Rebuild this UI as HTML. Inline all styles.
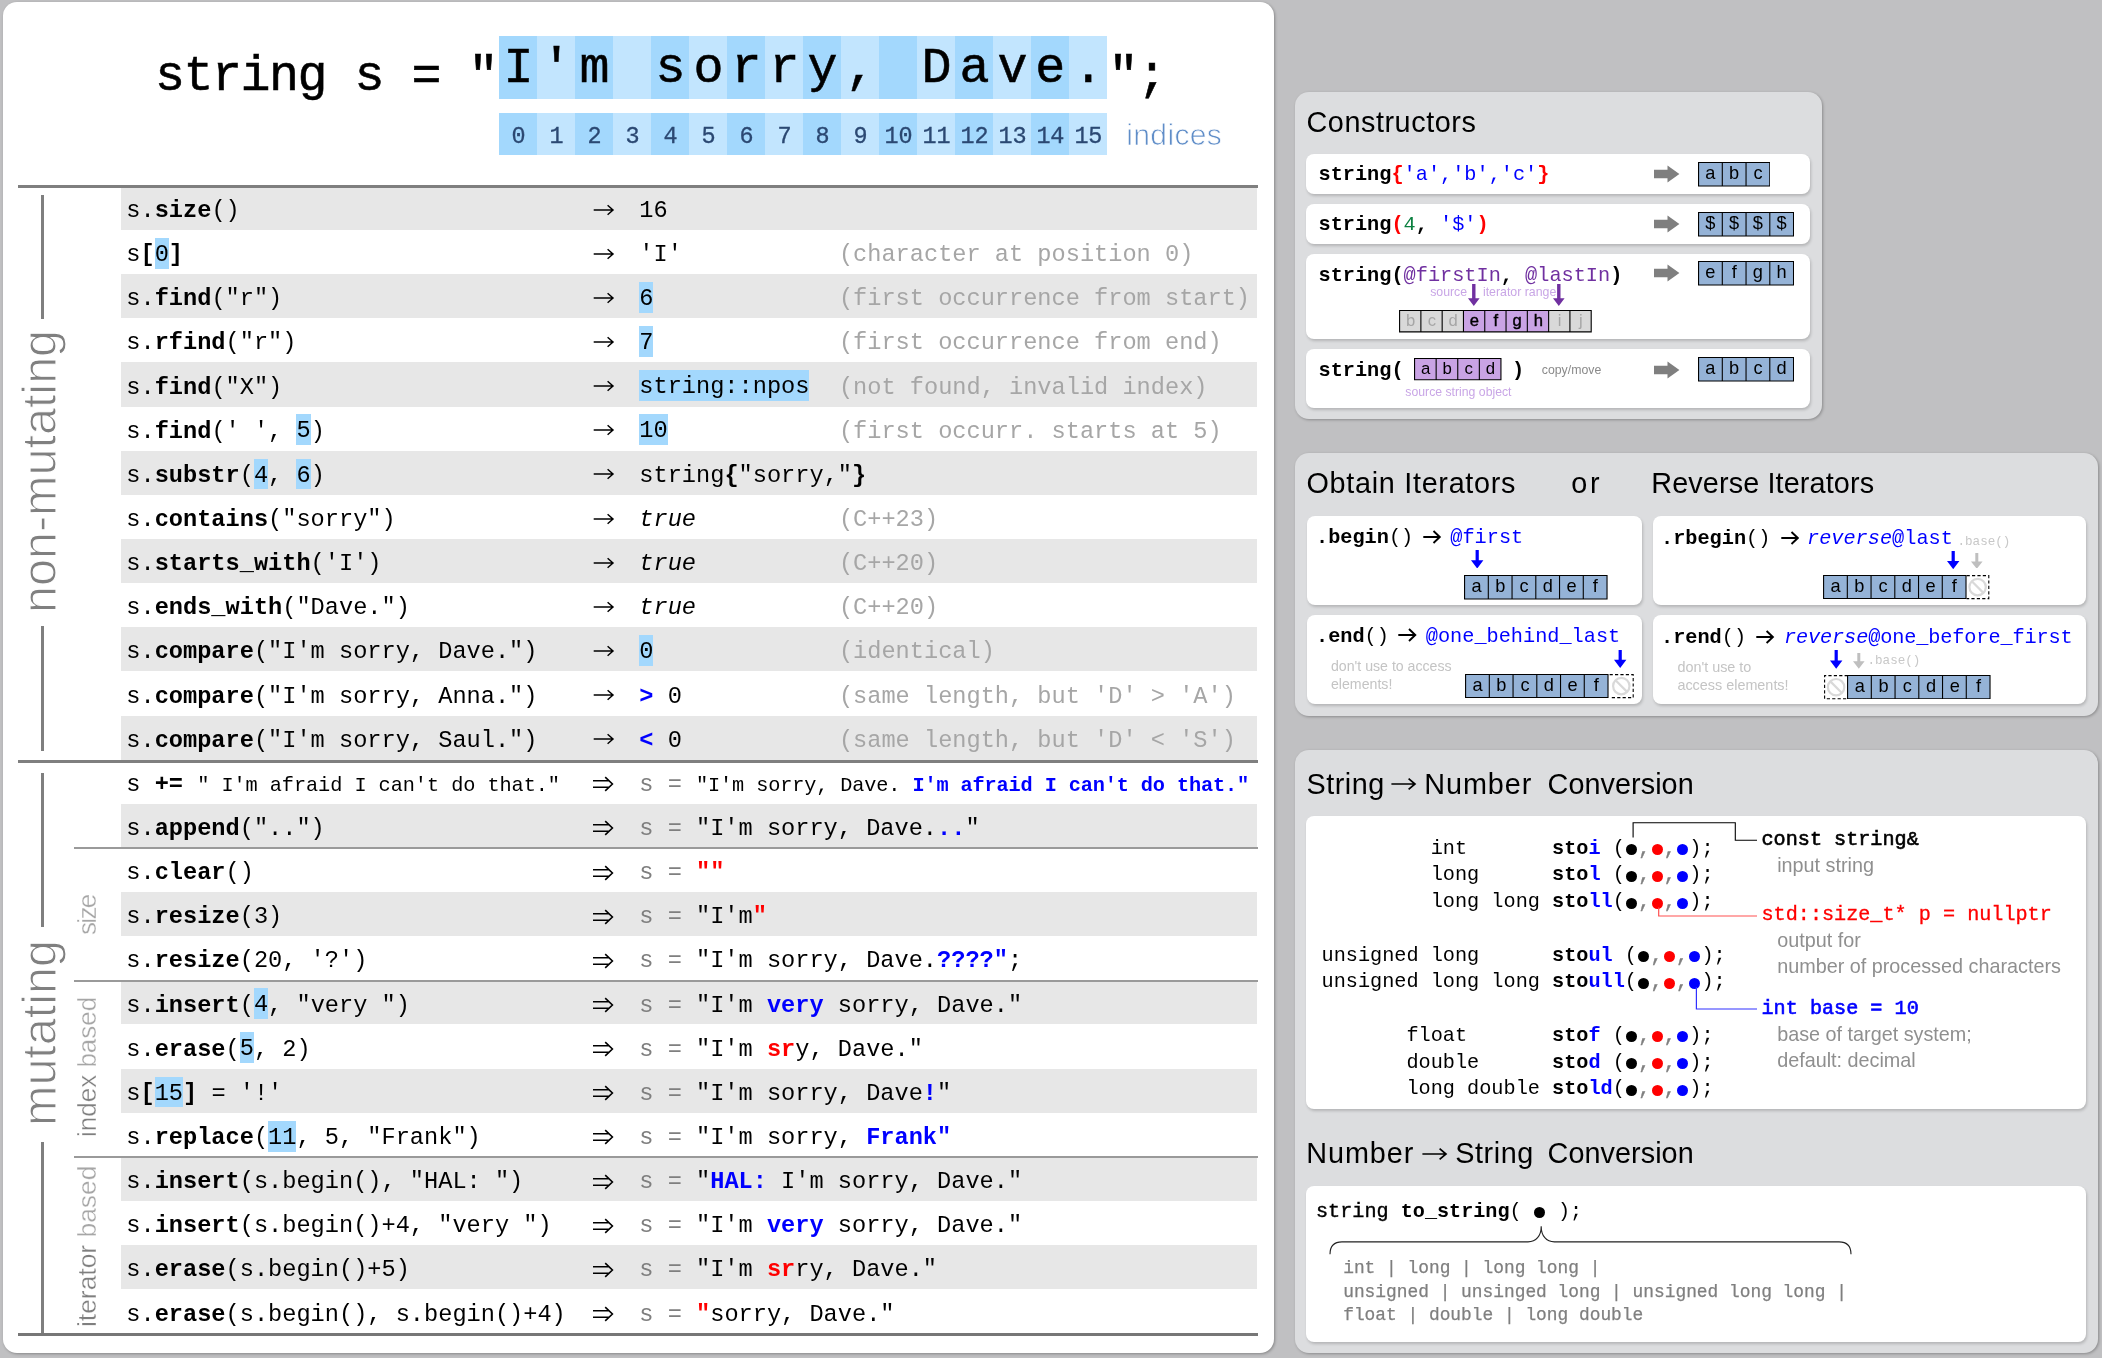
<!DOCTYPE html>
<html lang="en"><head><meta charset="utf-8"><title>std::string cheat sheet</title>
<style>
*{box-sizing:border-box}
html,body{margin:0;padding:0}
body{width:2102px;height:1358px;background:#c0c0c2;position:relative;overflow:hidden;font-family:"Liberation Sans",sans-serif;color:#000}
.a{position:absolute;white-space:pre}
.m{font-family:"Liberation Mono",monospace;font-size:23.63px;line-height:44.1px}
.s{font-family:"Liberation Mono",monospace;font-size:20.17px}
.sm{font-size:20.25px}
.sans{font-family:"Liberation Sans",sans-serif}
b{font-weight:bold}
.h{background:#a3d8fd;padding-top:3.3px;padding-bottom:.7px}
.g{color:#a6a6a6}
.g7{color:#7f7f7f}
.bl{color:#0000ff;font-weight:bold}
.rd{color:#ff0000;font-weight:bold}
.row{position:absolute;left:121px;width:1136px;height:44.14px;background:#e7e7e7}
.panel{position:absolute;background:#dcdddf;border-radius:14px;box-shadow:1px 1px 3px rgba(0,0,0,.28)}
.card{position:absolute;background:#fff;border-radius:8px;box-shadow:1px 2px 3px rgba(0,0,0,.18)}
.cells{position:absolute;display:flex;background:#000;padding:1px 0 1px 1px}
.cells i{display:block;font-style:normal;margin-right:1px;text-align:center;font-family:"Liberation Sans",sans-serif}
.dk{display:inline-block;width:13.4px;height:11px;position:relative}.dk:after{content:"";position:absolute;left:1.2px;top:1.6px;width:11px;height:11px;border-radius:50%;background:#000}.dr:after{background:#ff0000}.db:after{background:#0000ff}.cg{color:#808080;font-weight:normal;-webkit-text-stroke:.35px #808080}.dk2:after{top:.8px;left:.6px}
.vl{position:absolute;transform-origin:0 0;transform:rotate(-90deg);white-space:pre;font-family:"Liberation Sans",sans-serif}
</style></head>
<body>
<div id="w" style="position:absolute;left:0;top:0;width:2102px;height:1358px;will-change:transform">
<div style="position:absolute;left:3px;top:2px;width:1271px;height:1351.2px;background:#fff;border-radius:14px;box-shadow:1px 1px 3px rgba(0,0,0,.3)"></div>
<div class="a" style="left:499.4px;top:36.2px;width:38.2px;height:62.4px;background:#a3d8fd"></div><div class="a" style="left:499.4px;top:113.2px;width:38.2px;height:41.5px;background:#a3d8fd"></div><div class="a" style="left:537.4px;top:36.2px;width:38.2px;height:62.4px;background:#c2e5fe"></div><div class="a" style="left:537.4px;top:113.2px;width:38.2px;height:41.5px;background:#c2e5fe"></div><div class="a" style="left:575.4px;top:36.2px;width:38.2px;height:62.4px;background:#a3d8fd"></div><div class="a" style="left:575.4px;top:113.2px;width:38.2px;height:41.5px;background:#a3d8fd"></div><div class="a" style="left:613.4px;top:36.2px;width:38.2px;height:62.4px;background:#c2e5fe"></div><div class="a" style="left:613.4px;top:113.2px;width:38.2px;height:41.5px;background:#c2e5fe"></div><div class="a" style="left:651.4px;top:36.2px;width:38.2px;height:62.4px;background:#a3d8fd"></div><div class="a" style="left:651.4px;top:113.2px;width:38.2px;height:41.5px;background:#a3d8fd"></div><div class="a" style="left:689.4px;top:36.2px;width:38.2px;height:62.4px;background:#c2e5fe"></div><div class="a" style="left:689.4px;top:113.2px;width:38.2px;height:41.5px;background:#c2e5fe"></div><div class="a" style="left:727.4px;top:36.2px;width:38.2px;height:62.4px;background:#a3d8fd"></div><div class="a" style="left:727.4px;top:113.2px;width:38.2px;height:41.5px;background:#a3d8fd"></div><div class="a" style="left:765.4px;top:36.2px;width:38.2px;height:62.4px;background:#c2e5fe"></div><div class="a" style="left:765.4px;top:113.2px;width:38.2px;height:41.5px;background:#c2e5fe"></div><div class="a" style="left:803.4px;top:36.2px;width:38.2px;height:62.4px;background:#a3d8fd"></div><div class="a" style="left:803.4px;top:113.2px;width:38.2px;height:41.5px;background:#a3d8fd"></div><div class="a" style="left:841.4px;top:36.2px;width:38.2px;height:62.4px;background:#c2e5fe"></div><div class="a" style="left:841.4px;top:113.2px;width:38.2px;height:41.5px;background:#c2e5fe"></div><div class="a" style="left:879.4px;top:36.2px;width:38.2px;height:62.4px;background:#a3d8fd"></div><div class="a" style="left:879.4px;top:113.2px;width:38.2px;height:41.5px;background:#a3d8fd"></div><div class="a" style="left:917.4px;top:36.2px;width:38.2px;height:62.4px;background:#c2e5fe"></div><div class="a" style="left:917.4px;top:113.2px;width:38.2px;height:41.5px;background:#c2e5fe"></div><div class="a" style="left:955.4px;top:36.2px;width:38.2px;height:62.4px;background:#a3d8fd"></div><div class="a" style="left:955.4px;top:113.2px;width:38.2px;height:41.5px;background:#a3d8fd"></div><div class="a" style="left:993.4px;top:36.2px;width:38.2px;height:62.4px;background:#c2e5fe"></div><div class="a" style="left:993.4px;top:113.2px;width:38.2px;height:41.5px;background:#c2e5fe"></div><div class="a" style="left:1031.3px;top:36.2px;width:38.2px;height:62.4px;background:#a3d8fd"></div><div class="a" style="left:1031.3px;top:113.2px;width:38.2px;height:41.5px;background:#a3d8fd"></div><div class="a" style="left:1069.3px;top:36.2px;width:38.2px;height:62.4px;background:#c2e5fe"></div><div class="a" style="left:1069.3px;top:113.2px;width:38.2px;height:41.5px;background:#c2e5fe"></div>
<div class="a" style="left:155px;top:46.6px;font-family:'Liberation Mono',monospace;font-size:50px;line-height:60px;-webkit-text-stroke:0.55px #000;letter-spacing:-1.5px">string s = "</div>
<div class="a" style="left:499.4px;top:39.2px;width:38.0px;text-align:center;font-family:'Liberation Mono',monospace;font-size:50px;line-height:60px;-webkit-text-stroke:0.55px #000;">I</div><div class="a" style="left:537.4px;top:39.2px;width:38.0px;text-align:center;font-family:'Liberation Mono',monospace;font-size:50px;line-height:60px;-webkit-text-stroke:0.55px #000;">&#x27;</div><div class="a" style="left:575.4px;top:39.2px;width:38.0px;text-align:center;font-family:'Liberation Mono',monospace;font-size:50px;line-height:60px;-webkit-text-stroke:0.55px #000;">m</div><div class="a" style="left:651.4px;top:39.2px;width:38.0px;text-align:center;font-family:'Liberation Mono',monospace;font-size:50px;line-height:60px;-webkit-text-stroke:0.55px #000;">s</div><div class="a" style="left:689.4px;top:39.2px;width:38.0px;text-align:center;font-family:'Liberation Mono',monospace;font-size:50px;line-height:60px;-webkit-text-stroke:0.55px #000;">o</div><div class="a" style="left:727.4px;top:39.2px;width:38.0px;text-align:center;font-family:'Liberation Mono',monospace;font-size:50px;line-height:60px;-webkit-text-stroke:0.55px #000;">r</div><div class="a" style="left:765.4px;top:39.2px;width:38.0px;text-align:center;font-family:'Liberation Mono',monospace;font-size:50px;line-height:60px;-webkit-text-stroke:0.55px #000;">r</div><div class="a" style="left:803.4px;top:39.2px;width:38.0px;text-align:center;font-family:'Liberation Mono',monospace;font-size:50px;line-height:60px;-webkit-text-stroke:0.55px #000;">y</div><div class="a" style="left:841.4px;top:39.2px;width:38.0px;text-align:center;font-family:'Liberation Mono',monospace;font-size:50px;line-height:60px;-webkit-text-stroke:0.55px #000;">,</div><div class="a" style="left:917.4px;top:39.2px;width:38.0px;text-align:center;font-family:'Liberation Mono',monospace;font-size:50px;line-height:60px;-webkit-text-stroke:0.55px #000;">D</div><div class="a" style="left:955.4px;top:39.2px;width:38.0px;text-align:center;font-family:'Liberation Mono',monospace;font-size:50px;line-height:60px;-webkit-text-stroke:0.55px #000;">a</div><div class="a" style="left:993.4px;top:39.2px;width:38.0px;text-align:center;font-family:'Liberation Mono',monospace;font-size:50px;line-height:60px;-webkit-text-stroke:0.55px #000;">v</div><div class="a" style="left:1031.3px;top:39.2px;width:38.0px;text-align:center;font-family:'Liberation Mono',monospace;font-size:50px;line-height:60px;-webkit-text-stroke:0.55px #000;">e</div><div class="a" style="left:1069.3px;top:39.2px;width:38.0px;text-align:center;font-family:'Liberation Mono',monospace;font-size:50px;line-height:60px;-webkit-text-stroke:0.55px #000;">.</div>
<div class="a" style="left:1108.5px;top:46.6px;font-family:'Liberation Mono',monospace;font-size:50px;line-height:60px;-webkit-text-stroke:0.55px #000;letter-spacing:-1.5px">";</div>
<div class="a" style="left:499.4px;top:115.7px;width:38.0px;height:41.5px;line-height:41.5px;text-align:center;font-family:'Liberation Mono',monospace;font-size:23.47px;color:#2b4872;-webkit-text-stroke:.3px #2b4872;letter-spacing:-0.3px">0</div><div class="a" style="left:537.4px;top:115.7px;width:38.0px;height:41.5px;line-height:41.5px;text-align:center;font-family:'Liberation Mono',monospace;font-size:23.47px;color:#2b4872;-webkit-text-stroke:.3px #2b4872;letter-spacing:-0.3px">1</div><div class="a" style="left:575.4px;top:115.7px;width:38.0px;height:41.5px;line-height:41.5px;text-align:center;font-family:'Liberation Mono',monospace;font-size:23.47px;color:#2b4872;-webkit-text-stroke:.3px #2b4872;letter-spacing:-0.3px">2</div><div class="a" style="left:613.4px;top:115.7px;width:38.0px;height:41.5px;line-height:41.5px;text-align:center;font-family:'Liberation Mono',monospace;font-size:23.47px;color:#2b4872;-webkit-text-stroke:.3px #2b4872;letter-spacing:-0.3px">3</div><div class="a" style="left:651.4px;top:115.7px;width:38.0px;height:41.5px;line-height:41.5px;text-align:center;font-family:'Liberation Mono',monospace;font-size:23.47px;color:#2b4872;-webkit-text-stroke:.3px #2b4872;letter-spacing:-0.3px">4</div><div class="a" style="left:689.4px;top:115.7px;width:38.0px;height:41.5px;line-height:41.5px;text-align:center;font-family:'Liberation Mono',monospace;font-size:23.47px;color:#2b4872;-webkit-text-stroke:.3px #2b4872;letter-spacing:-0.3px">5</div><div class="a" style="left:727.4px;top:115.7px;width:38.0px;height:41.5px;line-height:41.5px;text-align:center;font-family:'Liberation Mono',monospace;font-size:23.47px;color:#2b4872;-webkit-text-stroke:.3px #2b4872;letter-spacing:-0.3px">6</div><div class="a" style="left:765.4px;top:115.7px;width:38.0px;height:41.5px;line-height:41.5px;text-align:center;font-family:'Liberation Mono',monospace;font-size:23.47px;color:#2b4872;-webkit-text-stroke:.3px #2b4872;letter-spacing:-0.3px">7</div><div class="a" style="left:803.4px;top:115.7px;width:38.0px;height:41.5px;line-height:41.5px;text-align:center;font-family:'Liberation Mono',monospace;font-size:23.47px;color:#2b4872;-webkit-text-stroke:.3px #2b4872;letter-spacing:-0.3px">8</div><div class="a" style="left:841.4px;top:115.7px;width:38.0px;height:41.5px;line-height:41.5px;text-align:center;font-family:'Liberation Mono',monospace;font-size:23.47px;color:#2b4872;-webkit-text-stroke:.3px #2b4872;letter-spacing:-0.3px">9</div><div class="a" style="left:879.4px;top:115.7px;width:38.0px;height:41.5px;line-height:41.5px;text-align:center;font-family:'Liberation Mono',monospace;font-size:23.47px;color:#2b4872;-webkit-text-stroke:.3px #2b4872;letter-spacing:-0.3px">10</div><div class="a" style="left:917.4px;top:115.7px;width:38.0px;height:41.5px;line-height:41.5px;text-align:center;font-family:'Liberation Mono',monospace;font-size:23.47px;color:#2b4872;-webkit-text-stroke:.3px #2b4872;letter-spacing:-0.3px">11</div><div class="a" style="left:955.4px;top:115.7px;width:38.0px;height:41.5px;line-height:41.5px;text-align:center;font-family:'Liberation Mono',monospace;font-size:23.47px;color:#2b4872;-webkit-text-stroke:.3px #2b4872;letter-spacing:-0.3px">12</div><div class="a" style="left:993.4px;top:115.7px;width:38.0px;height:41.5px;line-height:41.5px;text-align:center;font-family:'Liberation Mono',monospace;font-size:23.47px;color:#2b4872;-webkit-text-stroke:.3px #2b4872;letter-spacing:-0.3px">13</div><div class="a" style="left:1031.3px;top:115.7px;width:38.0px;height:41.5px;line-height:41.5px;text-align:center;font-family:'Liberation Mono',monospace;font-size:23.47px;color:#2b4872;-webkit-text-stroke:.3px #2b4872;letter-spacing:-0.3px">14</div><div class="a" style="left:1069.3px;top:115.7px;width:38.0px;height:41.5px;line-height:41.5px;text-align:center;font-family:'Liberation Mono',monospace;font-size:23.47px;color:#2b4872;-webkit-text-stroke:.3px #2b4872;letter-spacing:-0.3px">15</div>
<div class="a sans" style="left:1126.3px;top:115.4px;font-size:30px;line-height:40px;letter-spacing:.35px;color:#5f8dc8;-webkit-text-stroke:.75px #fff">indices</div>
<div class="row" style="top:185.8px"></div><div class="row" style="top:274.1px"></div><div class="row" style="top:362.4px"></div><div class="row" style="top:450.6px"></div><div class="row" style="top:538.9px"></div><div class="row" style="top:627.2px"></div><div class="row" style="top:715.5px"></div><div class="row" style="top:803.8px"></div><div class="row" style="top:892.0px"></div><div class="row" style="top:980.3px"></div><div class="row" style="top:1068.6px"></div><div class="row" style="top:1156.9px"></div><div class="row" style="top:1245.2px"></div>
<div class="a m" style="left:126.3px;top:189.0px">s.<b>size</b>()</div><svg class="a" style="left:593px;top:202.6px" width="22" height="14" viewBox="0 0 22 14"><path d="M0.7 7H19.6M14.6 2.2L20 7L14.6 11.8" fill="none" stroke="#000" stroke-width="1.5"/></svg><div class="a m" style="left:639.3px;top:189.0px">16</div>
<div class="a m" style="left:126.3px;top:233.1px">s<b>[</b><span class="h">0</span><b>]</b></div><svg class="a" style="left:593px;top:246.7px" width="22" height="14" viewBox="0 0 22 14"><path d="M0.7 7H19.6M14.6 2.2L20 7L14.6 11.8" fill="none" stroke="#000" stroke-width="1.5"/></svg><div class="a m" style="left:639.3px;top:233.1px">'I'</div><div class="a m g" style="left:838.9px;top:233.1px">(character at position 0)</div>
<div class="a m" style="left:126.3px;top:277.3px">s.<b>find</b>("r")</div><svg class="a" style="left:593px;top:290.9px" width="22" height="14" viewBox="0 0 22 14"><path d="M0.7 7H19.6M14.6 2.2L20 7L14.6 11.8" fill="none" stroke="#000" stroke-width="1.5"/></svg><div class="a m" style="left:639.3px;top:277.3px"><span class="h">6</span></div><div class="a m g" style="left:838.9px;top:277.3px">(first occurrence from start)</div>
<div class="a m" style="left:126.3px;top:321.4px">s.<b>rfind</b>("r")</div><svg class="a" style="left:593px;top:335.0px" width="22" height="14" viewBox="0 0 22 14"><path d="M0.7 7H19.6M14.6 2.2L20 7L14.6 11.8" fill="none" stroke="#000" stroke-width="1.5"/></svg><div class="a m" style="left:639.3px;top:321.4px"><span class="h">7</span></div><div class="a m g" style="left:838.9px;top:321.4px">(first occurrence from end)</div>
<div class="a m" style="left:126.3px;top:365.6px">s.<b>find</b>("X")</div><svg class="a" style="left:593px;top:379.2px" width="22" height="14" viewBox="0 0 22 14"><path d="M0.7 7H19.6M14.6 2.2L20 7L14.6 11.8" fill="none" stroke="#000" stroke-width="1.5"/></svg><div class="a m" style="left:639.3px;top:365.6px"><span class="h">string::npos</span></div><div class="a m g" style="left:838.9px;top:365.6px">(not found, invalid index)</div>
<div class="a m" style="left:126.3px;top:409.7px">s.<b>find</b>(' ', <span class="h">5</span>)</div><svg class="a" style="left:593px;top:423.3px" width="22" height="14" viewBox="0 0 22 14"><path d="M0.7 7H19.6M14.6 2.2L20 7L14.6 11.8" fill="none" stroke="#000" stroke-width="1.5"/></svg><div class="a m" style="left:639.3px;top:409.7px"><span class="h">10</span></div><div class="a m g" style="left:838.9px;top:409.7px">(first occurr. starts at 5)</div>
<div class="a m" style="left:126.3px;top:453.8px">s.<b>substr</b>(<span class="h">4</span>, <span class="h">6</span>)</div><svg class="a" style="left:593px;top:467.4px" width="22" height="14" viewBox="0 0 22 14"><path d="M0.7 7H19.6M14.6 2.2L20 7L14.6 11.8" fill="none" stroke="#000" stroke-width="1.5"/></svg><div class="a m" style="left:639.3px;top:453.8px">string<b>{</b>"sorry,"<b>}</b></div>
<div class="a m" style="left:126.3px;top:498.0px">s.<b>contains</b>("sorry")</div><svg class="a" style="left:593px;top:511.6px" width="22" height="14" viewBox="0 0 22 14"><path d="M0.7 7H19.6M14.6 2.2L20 7L14.6 11.8" fill="none" stroke="#000" stroke-width="1.5"/></svg><div class="a m" style="left:639.3px;top:498.0px"><i>true</i></div><div class="a m g" style="left:838.9px;top:498.0px">(C++23)</div>
<div class="a m" style="left:126.3px;top:542.1px">s.<b>starts_with</b>('I')</div><svg class="a" style="left:593px;top:555.7px" width="22" height="14" viewBox="0 0 22 14"><path d="M0.7 7H19.6M14.6 2.2L20 7L14.6 11.8" fill="none" stroke="#000" stroke-width="1.5"/></svg><div class="a m" style="left:639.3px;top:542.1px"><i>true</i></div><div class="a m g" style="left:838.9px;top:542.1px">(C++20)</div>
<div class="a m" style="left:126.3px;top:586.3px">s.<b>ends_with</b>("Dave.")</div><svg class="a" style="left:593px;top:599.9px" width="22" height="14" viewBox="0 0 22 14"><path d="M0.7 7H19.6M14.6 2.2L20 7L14.6 11.8" fill="none" stroke="#000" stroke-width="1.5"/></svg><div class="a m" style="left:639.3px;top:586.3px"><i>true</i></div><div class="a m g" style="left:838.9px;top:586.3px">(C++20)</div>
<div class="a m" style="left:126.3px;top:630.4px">s.<b>compare</b>("I'm sorry, Dave.")</div><svg class="a" style="left:593px;top:644.0px" width="22" height="14" viewBox="0 0 22 14"><path d="M0.7 7H19.6M14.6 2.2L20 7L14.6 11.8" fill="none" stroke="#000" stroke-width="1.5"/></svg><div class="a m" style="left:639.3px;top:630.4px"><span class="h">0</span></div><div class="a m g" style="left:838.9px;top:630.4px">(identical)</div>
<div class="a m" style="left:126.3px;top:674.5px">s.<b>compare</b>("I'm sorry, Anna.")</div><svg class="a" style="left:593px;top:688.1px" width="22" height="14" viewBox="0 0 22 14"><path d="M0.7 7H19.6M14.6 2.2L20 7L14.6 11.8" fill="none" stroke="#000" stroke-width="1.5"/></svg><div class="a m" style="left:639.3px;top:674.5px"><span class="bl">&gt;</span> 0</div><div class="a m g" style="left:838.9px;top:674.5px">(same length, but 'D' &gt; 'A')</div>
<div class="a m" style="left:126.3px;top:718.7px">s.<b>compare</b>("I'm sorry, Saul.")</div><svg class="a" style="left:593px;top:732.3px" width="22" height="14" viewBox="0 0 22 14"><path d="M0.7 7H19.6M14.6 2.2L20 7L14.6 11.8" fill="none" stroke="#000" stroke-width="1.5"/></svg><div class="a m" style="left:639.3px;top:718.7px"><span class="bl">&lt;</span> 0</div><div class="a m g" style="left:838.9px;top:718.7px">(same length, but 'D' &lt; 'S')</div>
<div class="a m" style="left:126.3px;top:762.8px">s <b>+=</b> <span class="sm" style="letter-spacing:-0.06px">" I'm afraid I can't do that."</span></div><svg class="a" style="left:592px;top:776.2px" width="23" height="16" viewBox="0 0 23 16"><path d="M1 4.7H16.8M1 11.3H16.8M13.2 1.2L20.4 8L13.2 14.8" fill="none" stroke="#000" stroke-width="1.6"/></svg><div class="a m" style="left:639.3px;top:762.8px"><span class="g7">s = </span><span class="sm" style="letter-spacing:-0.13px">"I'm sorry, Dave. <span class="bl">I'm afraid I can't do that."</span></span></div>
<div class="a m" style="left:126.3px;top:807.0px">s.<b>append</b>("..")</div><svg class="a" style="left:592px;top:820.4px" width="23" height="16" viewBox="0 0 23 16"><path d="M1 4.7H16.8M1 11.3H16.8M13.2 1.2L20.4 8L13.2 14.8" fill="none" stroke="#000" stroke-width="1.6"/></svg><div class="a m" style="left:639.3px;top:807.0px"><span class="g7">s = </span>"I'm sorry, Dave.<span class="bl">..</span>"</div>
<div class="a m" style="left:126.3px;top:851.1px">s.<b>clear</b>()</div><svg class="a" style="left:592px;top:864.5px" width="23" height="16" viewBox="0 0 23 16"><path d="M1 4.7H16.8M1 11.3H16.8M13.2 1.2L20.4 8L13.2 14.8" fill="none" stroke="#000" stroke-width="1.6"/></svg><div class="a m" style="left:639.3px;top:851.1px"><span class="g7">s = </span><span class="rd">""</span></div>
<div class="a m" style="left:126.3px;top:895.2px">s.<b>resize</b>(3)</div><svg class="a" style="left:592px;top:908.6px" width="23" height="16" viewBox="0 0 23 16"><path d="M1 4.7H16.8M1 11.3H16.8M13.2 1.2L20.4 8L13.2 14.8" fill="none" stroke="#000" stroke-width="1.6"/></svg><div class="a m" style="left:639.3px;top:895.2px"><span class="g7">s = </span>"I'm<span class="rd">"</span></div>
<div class="a m" style="left:126.3px;top:939.4px">s.<b>resize</b>(20, '?')</div><svg class="a" style="left:592px;top:952.8px" width="23" height="16" viewBox="0 0 23 16"><path d="M1 4.7H16.8M1 11.3H16.8M13.2 1.2L20.4 8L13.2 14.8" fill="none" stroke="#000" stroke-width="1.6"/></svg><div class="a m" style="left:639.3px;top:939.4px"><span class="g7">s = </span>"I'm sorry, Dave.<span class="bl">????"</span>;</div>
<div class="a m" style="left:126.3px;top:983.5px">s.<b>insert</b>(<span class="h">4</span>, "very ")</div><svg class="a" style="left:592px;top:996.9px" width="23" height="16" viewBox="0 0 23 16"><path d="M1 4.7H16.8M1 11.3H16.8M13.2 1.2L20.4 8L13.2 14.8" fill="none" stroke="#000" stroke-width="1.6"/></svg><div class="a m" style="left:639.3px;top:983.5px"><span class="g7">s = </span>"I'm <span class="bl">very</span> sorry, Dave."</div>
<div class="a m" style="left:126.3px;top:1027.7px">s.<b>erase</b>(<span class="h">5</span>, 2)</div><svg class="a" style="left:592px;top:1041.1px" width="23" height="16" viewBox="0 0 23 16"><path d="M1 4.7H16.8M1 11.3H16.8M13.2 1.2L20.4 8L13.2 14.8" fill="none" stroke="#000" stroke-width="1.6"/></svg><div class="a m" style="left:639.3px;top:1027.7px"><span class="g7">s = </span>"I'm <span class="rd">sr</span>y, Dave."</div>
<div class="a m" style="left:126.3px;top:1071.8px">s<b>[</b><span class="h">15</span><b>]</b> = '!'</div><svg class="a" style="left:592px;top:1085.2px" width="23" height="16" viewBox="0 0 23 16"><path d="M1 4.7H16.8M1 11.3H16.8M13.2 1.2L20.4 8L13.2 14.8" fill="none" stroke="#000" stroke-width="1.6"/></svg><div class="a m" style="left:639.3px;top:1071.8px"><span class="g7">s = </span>"I'm sorry, Dave<span class="bl">!</span>"</div>
<div class="a m" style="left:126.3px;top:1115.9px">s.<b>replace</b>(<span class="h">11</span>, 5, "Frank")</div><svg class="a" style="left:592px;top:1129.3px" width="23" height="16" viewBox="0 0 23 16"><path d="M1 4.7H16.8M1 11.3H16.8M13.2 1.2L20.4 8L13.2 14.8" fill="none" stroke="#000" stroke-width="1.6"/></svg><div class="a m" style="left:639.3px;top:1115.9px"><span class="g7">s = </span>"I'm sorry, <span class="bl">Frank"</span></div>
<div class="a m" style="left:126.3px;top:1160.1px">s.<b>insert</b>(s.begin(), "HAL: ")</div><svg class="a" style="left:592px;top:1173.5px" width="23" height="16" viewBox="0 0 23 16"><path d="M1 4.7H16.8M1 11.3H16.8M13.2 1.2L20.4 8L13.2 14.8" fill="none" stroke="#000" stroke-width="1.6"/></svg><div class="a m" style="left:639.3px;top:1160.1px"><span class="g7">s = </span>"<span class="bl">HAL:</span> I'm sorry, Dave."</div>
<div class="a m" style="left:126.3px;top:1204.2px">s.<b>insert</b>(s.begin()+4, "very ")</div><svg class="a" style="left:592px;top:1217.6px" width="23" height="16" viewBox="0 0 23 16"><path d="M1 4.7H16.8M1 11.3H16.8M13.2 1.2L20.4 8L13.2 14.8" fill="none" stroke="#000" stroke-width="1.6"/></svg><div class="a m" style="left:639.3px;top:1204.2px"><span class="g7">s = </span>"I'm <span class="bl">very</span> sorry, Dave."</div>
<div class="a m" style="left:126.3px;top:1248.4px">s.<b>erase</b>(s.begin()+5)</div><svg class="a" style="left:592px;top:1261.8px" width="23" height="16" viewBox="0 0 23 16"><path d="M1 4.7H16.8M1 11.3H16.8M13.2 1.2L20.4 8L13.2 14.8" fill="none" stroke="#000" stroke-width="1.6"/></svg><div class="a m" style="left:639.3px;top:1248.4px"><span class="g7">s = </span>"I'm <span class="rd">sr</span>ry, Dave."</div>
<div class="a m" style="left:126.3px;top:1292.5px">s.<b>erase</b>(s.begin(), s.begin()+4)</div><svg class="a" style="left:592px;top:1305.9px" width="23" height="16" viewBox="0 0 23 16"><path d="M1 4.7H16.8M1 11.3H16.8M13.2 1.2L20.4 8L13.2 14.8" fill="none" stroke="#000" stroke-width="1.6"/></svg><div class="a m" style="left:639.3px;top:1292.5px"><span class="g7">s = </span><span class="rd">"</span>sorry, Dave."</div>
<div class="a" style="left:18.2px;top:185.1px;width:1239.8px;height:3px;background:#7f7f7f"></div>
<div class="a" style="left:18.2px;top:760.1px;width:1239.8px;height:3px;background:#7f7f7f"></div>
<div class="a" style="left:18.2px;top:1333.1px;width:1239.8px;height:2.7px;background:#777"></div>
<div class="a" style="left:74px;top:847.3px;width:1184px;height:1.6px;background:#9a9a9a"></div><div class="a" style="left:74px;top:980.2px;width:1184px;height:1.6px;background:#9a9a9a"></div><div class="a" style="left:74px;top:1156.4px;width:1184px;height:1.6px;background:#9a9a9a"></div>
<div class="a" style="left:41.1px;top:194.5px;width:2.8px;height:124.4px;background:#7f7f7f"></div><div class="a" style="left:41.1px;top:626.2px;width:2.8px;height:124.9px;background:#7f7f7f"></div><div class="a" style="left:41.1px;top:772.7px;width:2.8px;height:154.0px;background:#7f7f7f"></div><div class="a" style="left:41.1px;top:1142.4px;width:2.8px;height:190.6px;background:#7f7f7f"></div>
<div class="vl" style="left:10.6px;top:612.9px;font-size:48.5px;line-height:56px;color:#808080;-webkit-text-stroke:1.1px #fff">non-mutating</div>
<div class="vl" style="left:10.6px;top:1125.8px;font-size:48.5px;line-height:56px;color:#808080;-webkit-text-stroke:1.1px #fff">mutating</div>
<div class="vl" style="left:72px;top:935px;font-size:26px;line-height:30px;-webkit-text-stroke:0.35px #fff;color:#a6a6a6;letter-spacing:-1.7px">size</div>
<div class="vl" style="left:72px;top:1137px;font-size:26px;line-height:30px;-webkit-text-stroke:0.35px #fff;color:#7f7f7f">index <span style="color:#a6a6a6">based</span></div>
<div class="vl" style="left:72px;top:1326.6px;font-size:26px;line-height:30px;-webkit-text-stroke:0.35px #fff;font-size:26.4px;color:#7f7f7f">iterator <span style="color:#a6a6a6">based</span></div>
<div class="panel" style="left:1295px;top:92px;width:526.5px;height:327px"></div>
<div class="a" style="left:1306.5px;top:103.60px;font-family:'Liberation Sans',sans-serif;font-size:28.8px;line-height:37px;letter-spacing:0.55px;">Constructors</div><div class="card" style="left:1306px;top:154.3px;width:504px;height:39.6px"></div><div class="card" style="left:1306px;top:204.3px;width:504px;height:39.6px"></div><div class="card" style="left:1306px;top:254px;width:504px;height:84.9px"></div><div class="card" style="left:1306px;top:349.1px;width:504px;height:58.6px"></div>
<div class="a" style="left:1318.5px;top:162.20px;font-family:'Liberation Mono',monospace;font-size:20.25px;line-height:26px;font-weight:bold;">string<span style="color:#ff0000">{</span><span style="color:#0000ff;font-weight:normal">'a','b','c'</span><span style="color:#ff0000">}</span></div><div class="a" style="left:1318.5px;top:212.20px;font-family:'Liberation Mono',monospace;font-size:20.25px;line-height:26px;font-weight:bold;">string<span style="color:#ff0000">(</span><span style="color:#0c8040;font-weight:normal">4</span>, <span style="color:#0000ff;font-weight:normal">'$'</span><span style="color:#ff0000">)</span></div><div class="a" style="left:1318.5px;top:262.50px;font-family:'Liberation Mono',monospace;font-size:20.25px;line-height:26px;font-weight:bold;">string(<span style="color:#7030a0;font-weight:normal">@firstIn</span>, <span style="color:#7030a0;font-weight:normal">@lastIn</span>)</div><div class="a" style="left:1318.5px;top:358.40px;font-family:'Liberation Mono',monospace;font-size:20.25px;line-height:26px;font-weight:bold;">string(</div><div class="a" style="left:1512.0px;top:358.40px;font-family:'Liberation Mono',monospace;font-size:20.25px;line-height:26px;font-weight:bold;">)</div><svg class="a" style="left:1653.6px;top:165.3px" width="26" height="18" viewBox="0 0 26 18"><path d="M0 4.7H13.5V0.5L25.4 9L13.5 17.5V13.3H0Z" fill="#7f7f7f"/></svg><svg class="a" style="left:1653.6px;top:215.3px" width="26" height="18" viewBox="0 0 26 18"><path d="M0 4.7H13.5V0.5L25.4 9L13.5 17.5V13.3H0Z" fill="#7f7f7f"/></svg><svg class="a" style="left:1653.6px;top:264.0px" width="26" height="18" viewBox="0 0 26 18"><path d="M0 4.7H13.5V0.5L25.4 9L13.5 17.5V13.3H0Z" fill="#7f7f7f"/></svg><svg class="a" style="left:1653.6px;top:360.5px" width="26" height="18" viewBox="0 0 26 18"><path d="M0 4.7H13.5V0.5L25.4 9L13.5 17.5V13.3H0Z" fill="#7f7f7f"/></svg>
<svg class="a" style="left:1698.00px;top:162.20px" width="72.35" height="24.60" viewBox="0 0 72.35 24.60"><rect x="0.55" y="0.55" width="23.75" height="23.50" fill="#95b3d7"/><rect x="24.30" y="0.55" width="23.75" height="23.50" fill="#95b3d7"/><rect x="48.05" y="0.55" width="23.75" height="23.50" fill="#95b3d7"/><path d="M0 0.55H72.35M0 24.05H72.35M0.55 0V24.60M24.30 0V24.60M48.05 0V24.60M71.80 0V24.60" stroke="#000" stroke-width="1.1" fill="none"/></svg><div class="a sans" style="left:1698.55px;top:163.3px;width:23.75px;height:22.4px;color:#000;;text-align:center;font-size:18.2px;line-height:21.2px">a</div><div class="a sans" style="left:1722.30px;top:163.3px;width:23.75px;height:22.4px;color:#000;;text-align:center;font-size:18.2px;line-height:21.2px">b</div><div class="a sans" style="left:1746.05px;top:163.3px;width:23.75px;height:22.4px;color:#000;;text-align:center;font-size:18.2px;line-height:21.2px">c</div>
<svg class="a" style="left:1698.00px;top:212.30px" width="96.10" height="24.60" viewBox="0 0 96.10 24.60"><rect x="0.55" y="0.55" width="23.75" height="23.50" fill="#95b3d7"/><rect x="24.30" y="0.55" width="23.75" height="23.50" fill="#95b3d7"/><rect x="48.05" y="0.55" width="23.75" height="23.50" fill="#95b3d7"/><rect x="71.80" y="0.55" width="23.75" height="23.50" fill="#95b3d7"/><path d="M0 0.55H96.10M0 24.05H96.10M0.55 0V24.60M24.30 0V24.60M48.05 0V24.60M71.80 0V24.60M95.55 0V24.60" stroke="#000" stroke-width="1.1" fill="none"/></svg><div class="a sans" style="left:1698.55px;top:213.4px;width:23.75px;height:22.4px;color:#000;;text-align:center;font-size:18.2px;line-height:21.2px">$</div><div class="a sans" style="left:1722.30px;top:213.4px;width:23.75px;height:22.4px;color:#000;;text-align:center;font-size:18.2px;line-height:21.2px">$</div><div class="a sans" style="left:1746.05px;top:213.4px;width:23.75px;height:22.4px;color:#000;;text-align:center;font-size:18.2px;line-height:21.2px">$</div><div class="a sans" style="left:1769.80px;top:213.4px;width:23.75px;height:22.4px;color:#000;;text-align:center;font-size:18.2px;line-height:21.2px">$</div>
<svg class="a" style="left:1698.00px;top:261.30px" width="96.10" height="24.60" viewBox="0 0 96.10 24.60"><rect x="0.55" y="0.55" width="23.75" height="23.50" fill="#95b3d7"/><rect x="24.30" y="0.55" width="23.75" height="23.50" fill="#95b3d7"/><rect x="48.05" y="0.55" width="23.75" height="23.50" fill="#95b3d7"/><rect x="71.80" y="0.55" width="23.75" height="23.50" fill="#95b3d7"/><path d="M0 0.55H96.10M0 24.05H96.10M0.55 0V24.60M24.30 0V24.60M48.05 0V24.60M71.80 0V24.60M95.55 0V24.60" stroke="#000" stroke-width="1.1" fill="none"/></svg><div class="a sans" style="left:1698.55px;top:262.4px;width:23.75px;height:22.4px;color:#000;;text-align:center;font-size:18.2px;line-height:21.2px">e</div><div class="a sans" style="left:1722.30px;top:262.4px;width:23.75px;height:22.4px;color:#000;;text-align:center;font-size:18.2px;line-height:21.2px">f</div><div class="a sans" style="left:1746.05px;top:262.4px;width:23.75px;height:22.4px;color:#000;;text-align:center;font-size:18.2px;line-height:21.2px">g</div><div class="a sans" style="left:1769.80px;top:262.4px;width:23.75px;height:22.4px;color:#000;;text-align:center;font-size:18.2px;line-height:21.2px">h</div>
<svg class="a" style="left:1698.00px;top:357.30px" width="96.10" height="24.60" viewBox="0 0 96.10 24.60"><rect x="0.55" y="0.55" width="23.75" height="23.50" fill="#95b3d7"/><rect x="24.30" y="0.55" width="23.75" height="23.50" fill="#95b3d7"/><rect x="48.05" y="0.55" width="23.75" height="23.50" fill="#95b3d7"/><rect x="71.80" y="0.55" width="23.75" height="23.50" fill="#95b3d7"/><path d="M0 0.55H96.10M0 24.05H96.10M0.55 0V24.60M24.30 0V24.60M48.05 0V24.60M71.80 0V24.60M95.55 0V24.60" stroke="#000" stroke-width="1.1" fill="none"/></svg><div class="a sans" style="left:1698.55px;top:358.4px;width:23.75px;height:22.4px;color:#000;;text-align:center;font-size:18.2px;line-height:21.2px">a</div><div class="a sans" style="left:1722.30px;top:358.4px;width:23.75px;height:22.4px;color:#000;;text-align:center;font-size:18.2px;line-height:21.2px">b</div><div class="a sans" style="left:1746.05px;top:358.4px;width:23.75px;height:22.4px;color:#000;;text-align:center;font-size:18.2px;line-height:21.2px">c</div><div class="a sans" style="left:1769.80px;top:358.4px;width:23.75px;height:22.4px;color:#000;;text-align:center;font-size:18.2px;line-height:21.2px">d</div>
<svg class="a" style="left:1399.30px;top:310.30px" width="192.80" height="22.40" viewBox="0 0 192.80 22.40"><rect x="0.55" y="0.55" width="21.30" height="21.30" fill="#d9d9d9"/><rect x="21.85" y="0.55" width="21.30" height="21.30" fill="#d9d9d9"/><rect x="43.15" y="0.55" width="21.30" height="21.30" fill="#d9d9d9"/><rect x="64.45" y="0.55" width="21.30" height="21.30" fill="#c9a3e4"/><rect x="85.75" y="0.55" width="21.30" height="21.30" fill="#c9a3e4"/><rect x="107.05" y="0.55" width="21.30" height="21.30" fill="#c9a3e4"/><rect x="128.35" y="0.55" width="21.30" height="21.30" fill="#c9a3e4"/><rect x="149.65" y="0.55" width="21.30" height="21.30" fill="#d9d9d9"/><rect x="170.95" y="0.55" width="21.30" height="21.30" fill="#d9d9d9"/><path d="M0 0.55H192.80M0 21.85H192.80M0.55 0V22.40M21.85 0V22.40M43.15 0V22.40M64.45 0V22.40M85.75 0V22.40M107.05 0V22.40M128.35 0V22.40M149.65 0V22.40M170.95 0V22.40M192.25 0V22.40" stroke="#000" stroke-width="1.1" fill="none"/></svg><div class="a sans" style="left:1399.85px;top:311.4px;width:21.30px;height:20.2px;color:#a6a6a6;;text-align:center;font-size:16.6px;line-height:19.0px">b</div><div class="a sans" style="left:1421.15px;top:311.4px;width:21.30px;height:20.2px;color:#a6a6a6;;text-align:center;font-size:16.6px;line-height:19.0px">c</div><div class="a sans" style="left:1442.45px;top:311.4px;width:21.30px;height:20.2px;color:#a6a6a6;;text-align:center;font-size:16.6px;line-height:19.0px">d</div><div class="a sans" style="left:1463.75px;top:311.4px;width:21.30px;height:20.2px;color:#000;-webkit-text-stroke:.4px #000;text-align:center;font-size:16.6px;line-height:19.0px">e</div><div class="a sans" style="left:1485.05px;top:311.4px;width:21.30px;height:20.2px;color:#000;-webkit-text-stroke:.4px #000;text-align:center;font-size:16.6px;line-height:19.0px">f</div><div class="a sans" style="left:1506.35px;top:311.4px;width:21.30px;height:20.2px;color:#000;-webkit-text-stroke:.4px #000;text-align:center;font-size:16.6px;line-height:19.0px">g</div><div class="a sans" style="left:1527.65px;top:311.4px;width:21.30px;height:20.2px;color:#000;-webkit-text-stroke:.4px #000;text-align:center;font-size:16.6px;line-height:19.0px">h</div><div class="a sans" style="left:1548.95px;top:311.4px;width:21.30px;height:20.2px;color:#a6a6a6;;text-align:center;font-size:16.6px;line-height:19.0px">i</div><div class="a sans" style="left:1570.25px;top:311.4px;width:21.30px;height:20.2px;color:#a6a6a6;;text-align:center;font-size:16.6px;line-height:19.0px">j</div>
<svg class="a" style="left:1414.20px;top:358.40px" width="87.50" height="22.30" viewBox="0 0 87.50 22.30"><rect x="0.55" y="0.55" width="21.60" height="21.20" fill="#c9a3e4"/><rect x="22.15" y="0.55" width="21.60" height="21.20" fill="#c9a3e4"/><rect x="43.75" y="0.55" width="21.60" height="21.20" fill="#c9a3e4"/><rect x="65.35" y="0.55" width="21.60" height="21.20" fill="#c9a3e4"/><path d="M0 0.55H87.50M0 21.75H87.50M0.55 0V22.30M22.15 0V22.30M43.75 0V22.30M65.35 0V22.30M86.95 0V22.30" stroke="#000" stroke-width="1.1" fill="none"/></svg><div class="a sans" style="left:1414.75px;top:359.5px;width:21.60px;height:20.1px;color:#000;;text-align:center;font-size:16.8px;line-height:18.9px">a</div><div class="a sans" style="left:1436.35px;top:359.5px;width:21.60px;height:20.1px;color:#000;;text-align:center;font-size:16.8px;line-height:18.9px">b</div><div class="a sans" style="left:1457.95px;top:359.5px;width:21.60px;height:20.1px;color:#000;;text-align:center;font-size:16.8px;line-height:18.9px">c</div><div class="a sans" style="left:1479.55px;top:359.5px;width:21.60px;height:20.1px;color:#000;;text-align:center;font-size:16.8px;line-height:18.9px">d</div>
<div class="a" style="left:1430.2px;top:283.50px;font-family:'Liberation Sans',sans-serif;font-size:12.3px;line-height:16px;color:#c9a6e6;">source</div><div class="a" style="left:1482.9px;top:283.50px;font-family:'Liberation Sans',sans-serif;font-size:12.35px;line-height:16px;color:#c9a6e6;">iterator range</div><div class="a" style="left:1405.3px;top:383.70px;font-family:'Liberation Sans',sans-serif;font-size:12.25px;line-height:16px;color:#c9a6e6;">source string object</div><div class="a" style="left:1541.8px;top:361.80px;font-family:'Liberation Sans',sans-serif;font-size:12.3px;line-height:16px;color:#8a8a8a;">copy/move</div><svg class="a" style="left:1467.0px;top:284.4px" width="13.6" height="21.9" viewBox="0 0 13.6 21.9"><path d="M5.10 0H8.50V14.30H12.60L6.80 21.90L1.00 14.30H5.10Z" fill="#7030a0"/></svg><svg class="a" style="left:1552.2px;top:284.4px" width="13.6" height="21.9" viewBox="0 0 13.6 21.9"><path d="M5.10 0H8.50V14.30H12.60L6.80 21.90L1.00 14.30H5.10Z" fill="#7030a0"/></svg>
<div class="panel" style="left:1295px;top:452.7px;width:802.6px;height:263.8px"></div>
<div class="a" style="left:1306.5px;top:465.40px;font-family:'Liberation Sans',sans-serif;font-size:28.8px;line-height:37px;letter-spacing:0.7px;">Obtain Iterators</div><div class="a" style="left:1571.3px;top:465.40px;font-family:'Liberation Sans',sans-serif;font-size:28.8px;line-height:37px;letter-spacing:2.6px;">or</div><div class="a" style="left:1651.3px;top:465.40px;font-family:'Liberation Sans',sans-serif;font-size:28.8px;line-height:37px;letter-spacing:0.12px;">Reverse Iterators</div><div class="card" style="left:1307px;top:516px;width:335.0px;height:89.0px"></div><div class="card" style="left:1307px;top:615px;width:335.0px;height:89.0px"></div><div class="card" style="left:1652.7px;top:516px;width:433.5px;height:89.0px"></div><div class="card" style="left:1652.7px;top:615.2px;width:433.5px;height:88.8px"></div>
<div class="a" style="left:1316.0px;top:525.00px;font-family:'Liberation Mono',monospace;font-size:20.25px;line-height:26px;"><b>.begin</b>()</div><svg class="a" style="left:1423.2px;top:530.0px" width="18.7" height="14" viewBox="0 0 18.7 14"><path d="M0.3 7H16.9M10.5 1.0L16.8 7L10.5 13.0" fill="none" stroke="#000" stroke-width="1.9"/></svg><div class="a" style="left:1450.3px;top:525.00px;font-family:'Liberation Mono',monospace;font-size:20.25px;line-height:26px;color:#0000ff;">@first</div><svg class="a" style="left:1469.5px;top:549.5px" width="14.4" height="18.5" viewBox="0 0 14.4 18.5"><path d="M5.60 0H8.80V10.30H13.40L7.20 18.50L1.00 10.30H5.60Z" fill="#0000ff"/></svg><svg class="a" style="left:1464.20px;top:575.20px" width="143.60" height="24.60" viewBox="0 0 143.60 24.60"><rect x="0.55" y="0.55" width="23.75" height="23.50" fill="#95b3d7"/><rect x="24.30" y="0.55" width="23.75" height="23.50" fill="#95b3d7"/><rect x="48.05" y="0.55" width="23.75" height="23.50" fill="#95b3d7"/><rect x="71.80" y="0.55" width="23.75" height="23.50" fill="#95b3d7"/><rect x="95.55" y="0.55" width="23.75" height="23.50" fill="#95b3d7"/><rect x="119.30" y="0.55" width="23.75" height="23.50" fill="#95b3d7"/><path d="M0 0.55H143.60M0 24.05H143.60M0.55 0V24.60M24.30 0V24.60M48.05 0V24.60M71.80 0V24.60M95.55 0V24.60M119.30 0V24.60M143.05 0V24.60" stroke="#000" stroke-width="1.1" fill="none"/></svg><div class="a sans" style="left:1464.75px;top:576.3px;width:23.75px;height:22.4px;color:#000;;text-align:center;font-size:18.2px;line-height:21.2px">a</div><div class="a sans" style="left:1488.50px;top:576.3px;width:23.75px;height:22.4px;color:#000;;text-align:center;font-size:18.2px;line-height:21.2px">b</div><div class="a sans" style="left:1512.25px;top:576.3px;width:23.75px;height:22.4px;color:#000;;text-align:center;font-size:18.2px;line-height:21.2px">c</div><div class="a sans" style="left:1536.00px;top:576.3px;width:23.75px;height:22.4px;color:#000;;text-align:center;font-size:18.2px;line-height:21.2px">d</div><div class="a sans" style="left:1559.75px;top:576.3px;width:23.75px;height:22.4px;color:#000;;text-align:center;font-size:18.2px;line-height:21.2px">e</div><div class="a sans" style="left:1583.50px;top:576.3px;width:23.75px;height:22.4px;color:#000;;text-align:center;font-size:18.2px;line-height:21.2px">f</div>
<div class="a" style="left:1316.0px;top:623.50px;font-family:'Liberation Mono',monospace;font-size:20.25px;line-height:26px;"><b>.end</b>()</div><svg class="a" style="left:1398.2px;top:627.8px" width="19.2" height="14" viewBox="0 0 19.2 14"><path d="M0.3 7H17.4M11.0 1.0L17.3 7L11.0 13.0" fill="none" stroke="#000" stroke-width="1.9"/></svg><div class="a" style="left:1425.8px;top:623.50px;font-family:'Liberation Mono',monospace;font-size:20.25px;line-height:26px;color:#0000ff;">@one_behind_last</div><svg class="a" style="left:1612.5px;top:649.7px" width="14.4" height="17.9" viewBox="0 0 14.4 17.9"><path d="M5.60 0H8.80V9.70H13.40L7.20 17.90L1.00 9.70H5.60Z" fill="#0000ff"/></svg><svg class="a" style="left:1465.20px;top:674.00px" width="143.60" height="24.20" viewBox="0 0 143.60 24.20"><rect x="0.55" y="0.55" width="23.75" height="23.10" fill="#95b3d7"/><rect x="24.30" y="0.55" width="23.75" height="23.10" fill="#95b3d7"/><rect x="48.05" y="0.55" width="23.75" height="23.10" fill="#95b3d7"/><rect x="71.80" y="0.55" width="23.75" height="23.10" fill="#95b3d7"/><rect x="95.55" y="0.55" width="23.75" height="23.10" fill="#95b3d7"/><rect x="119.30" y="0.55" width="23.75" height="23.10" fill="#95b3d7"/><path d="M0 0.55H143.60M0 23.65H143.60M0.55 0V24.20M24.30 0V24.20M48.05 0V24.20M71.80 0V24.20M95.55 0V24.20M119.30 0V24.20M143.05 0V24.20" stroke="#000" stroke-width="1.1" fill="none"/></svg><div class="a sans" style="left:1465.75px;top:675.1px;width:23.75px;height:22.0px;color:#000;;text-align:center;font-size:18.2px;line-height:20.8px">a</div><div class="a sans" style="left:1489.50px;top:675.1px;width:23.75px;height:22.0px;color:#000;;text-align:center;font-size:18.2px;line-height:20.8px">b</div><div class="a sans" style="left:1513.25px;top:675.1px;width:23.75px;height:22.0px;color:#000;;text-align:center;font-size:18.2px;line-height:20.8px">c</div><div class="a sans" style="left:1537.00px;top:675.1px;width:23.75px;height:22.0px;color:#000;;text-align:center;font-size:18.2px;line-height:20.8px">d</div><div class="a sans" style="left:1560.75px;top:675.1px;width:23.75px;height:22.0px;color:#000;;text-align:center;font-size:18.2px;line-height:20.8px">e</div><div class="a sans" style="left:1584.50px;top:675.1px;width:23.75px;height:22.0px;color:#000;;text-align:center;font-size:18.2px;line-height:20.8px">f</div>
<svg class="a" style="left:1608.6px;top:674.0px" width="25" height="25.2" viewBox="0 0 25 25.2"><path d="M0.6 0.6H24.2V23.6H0.6" fill="none" stroke="#000" stroke-width="1.1" stroke-dasharray="3.2 2.2"/><circle cx="12.3" cy="12.1" r="8.2" fill="none" stroke="#d9d9d9" stroke-width="2.2"/><path d="M6.5 6.3L18.1 17.9" stroke="#d9d9d9" stroke-width="2.2"/></svg><div class="a" style="left:1331.0px;top:657.10px;font-family:'Liberation Sans',sans-serif;font-size:14.15px;line-height:18px;color:#c4c4c4;">don't use to access</div><div class="a" style="left:1331.0px;top:675.10px;font-family:'Liberation Sans',sans-serif;font-size:14.15px;line-height:18px;color:#c4c4c4;">elements!</div><div class="a" style="left:1661.0px;top:525.60px;font-family:'Liberation Mono',monospace;font-size:20.25px;line-height:26px;"><b>.rbegin</b>()</div><svg class="a" style="left:1780.7px;top:530.6px" width="18.7" height="14" viewBox="0 0 18.7 14"><path d="M0.3 7H16.9M10.5 1.0L16.8 7L10.5 13.0" fill="none" stroke="#000" stroke-width="1.9"/></svg><div class="a" style="left:1807.0px;top:525.60px;font-family:'Liberation Mono',monospace;font-size:20.25px;line-height:26px;color:#0000ff;"><i>reverse</i>@last</div><div class="a" style="left:1957.5px;top:534.20px;font-family:'Liberation Mono',monospace;font-size:12.6px;line-height:16px;color:#c8c8c8;">.base()</div><svg class="a" style="left:1946.0px;top:550.5px" width="14.4" height="18.2" viewBox="0 0 14.4 18.2"><path d="M5.60 0H8.80V10.00H13.40L7.20 18.20L1.00 10.00H5.60Z" fill="#0000ff"/></svg><svg class="a" style="left:1970.1px;top:552.5px" width="13.6" height="15.8" viewBox="0 0 13.6 15.8"><path d="M5.30 0H8.30V8.40H12.60L6.80 15.80L1.00 8.40H5.30Z" fill="#bfbfbf"/></svg><svg class="a" style="left:1823.10px;top:574.50px" width="143.60" height="24.20" viewBox="0 0 143.60 24.20"><rect x="0.55" y="0.55" width="23.75" height="23.10" fill="#95b3d7"/><rect x="24.30" y="0.55" width="23.75" height="23.10" fill="#95b3d7"/><rect x="48.05" y="0.55" width="23.75" height="23.10" fill="#95b3d7"/><rect x="71.80" y="0.55" width="23.75" height="23.10" fill="#95b3d7"/><rect x="95.55" y="0.55" width="23.75" height="23.10" fill="#95b3d7"/><rect x="119.30" y="0.55" width="23.75" height="23.10" fill="#95b3d7"/><path d="M0 0.55H143.60M0 23.65H143.60M0.55 0V24.20M24.30 0V24.20M48.05 0V24.20M71.80 0V24.20M95.55 0V24.20M119.30 0V24.20M143.05 0V24.20" stroke="#000" stroke-width="1.1" fill="none"/></svg><div class="a sans" style="left:1823.65px;top:575.6px;width:23.75px;height:22.0px;color:#000;;text-align:center;font-size:18.2px;line-height:20.8px">a</div><div class="a sans" style="left:1847.40px;top:575.6px;width:23.75px;height:22.0px;color:#000;;text-align:center;font-size:18.2px;line-height:20.8px">b</div><div class="a sans" style="left:1871.15px;top:575.6px;width:23.75px;height:22.0px;color:#000;;text-align:center;font-size:18.2px;line-height:20.8px">c</div><div class="a sans" style="left:1894.90px;top:575.6px;width:23.75px;height:22.0px;color:#000;;text-align:center;font-size:18.2px;line-height:20.8px">d</div><div class="a sans" style="left:1918.65px;top:575.6px;width:23.75px;height:22.0px;color:#000;;text-align:center;font-size:18.2px;line-height:20.8px">e</div><div class="a sans" style="left:1942.40px;top:575.6px;width:23.75px;height:22.0px;color:#000;;text-align:center;font-size:18.2px;line-height:20.8px">f</div>
<svg class="a" style="left:1966.4px;top:574.5px" width="23.6" height="25.2" viewBox="0 0 23.6 25.2"><path d="M0.6 0.6H22.8V23.6H0.6" fill="none" stroke="#000" stroke-width="1.1" stroke-dasharray="3.2 2.2"/><circle cx="11.600000000000001" cy="12.1" r="8.2" fill="none" stroke="#d9d9d9" stroke-width="2.2"/><path d="M5.8 6.3L17.4 17.9" stroke="#d9d9d9" stroke-width="2.2"/></svg><div class="a" style="left:1661.0px;top:624.50px;font-family:'Liberation Mono',monospace;font-size:20.25px;line-height:26px;"><b>.rend</b>()</div><svg class="a" style="left:1756.0px;top:629.5px" width="18.8" height="14" viewBox="0 0 18.8 14"><path d="M0.3 7H17.0M10.6 1.0L16.9 7L10.6 13.0" fill="none" stroke="#000" stroke-width="1.9"/></svg><div class="a" style="left:1784.0px;top:624.50px;font-family:'Liberation Mono',monospace;font-size:20.25px;line-height:26px;color:#0000ff;letter-spacing:-.13px;"><i>reverse</i>@one_before_first</div><div class="a" style="left:1867.5px;top:652.70px;font-family:'Liberation Mono',monospace;font-size:12.6px;line-height:16px;color:#c8c8c8;">.base()</div><svg class="a" style="left:1829.1px;top:650.0px" width="14.4" height="18.7" viewBox="0 0 14.4 18.7"><path d="M5.60 0H8.80V10.50H13.40L7.20 18.70L1.00 10.50H5.60Z" fill="#0000ff"/></svg><svg class="a" style="left:1852.3px;top:653.0px" width="13.6" height="15.7" viewBox="0 0 13.6 15.7"><path d="M5.30 0H8.30V8.30H12.60L6.80 15.70L1.00 8.30H5.30Z" fill="#bfbfbf"/></svg><svg class="a" style="left:1824.2px;top:675.0px" width="24.6" height="25.4" viewBox="0 0 24.6 25.4"><path d="M23.8 0.6H0.6V23.8H23.8" fill="none" stroke="#000" stroke-width="1.1" stroke-dasharray="3.2 2.2"/><circle cx="12.100000000000001" cy="12.2" r="8.2" fill="none" stroke="#d9d9d9" stroke-width="2.2"/><path d="M6.3 6.4L17.9 18.0" stroke="#d9d9d9" stroke-width="2.2"/></svg><svg class="a" style="left:1847.40px;top:675.00px" width="143.60" height="24.40" viewBox="0 0 143.60 24.40"><rect x="0.55" y="0.55" width="23.75" height="23.30" fill="#95b3d7"/><rect x="24.30" y="0.55" width="23.75" height="23.30" fill="#95b3d7"/><rect x="48.05" y="0.55" width="23.75" height="23.30" fill="#95b3d7"/><rect x="71.80" y="0.55" width="23.75" height="23.30" fill="#95b3d7"/><rect x="95.55" y="0.55" width="23.75" height="23.30" fill="#95b3d7"/><rect x="119.30" y="0.55" width="23.75" height="23.30" fill="#95b3d7"/><path d="M0 0.55H143.60M0 23.85H143.60M0.55 0V24.40M24.30 0V24.40M48.05 0V24.40M71.80 0V24.40M95.55 0V24.40M119.30 0V24.40M143.05 0V24.40" stroke="#000" stroke-width="1.1" fill="none"/></svg><div class="a sans" style="left:1847.95px;top:676.1px;width:23.75px;height:22.2px;color:#000;;text-align:center;font-size:18.2px;line-height:21.0px">a</div><div class="a sans" style="left:1871.70px;top:676.1px;width:23.75px;height:22.2px;color:#000;;text-align:center;font-size:18.2px;line-height:21.0px">b</div><div class="a sans" style="left:1895.45px;top:676.1px;width:23.75px;height:22.2px;color:#000;;text-align:center;font-size:18.2px;line-height:21.0px">c</div><div class="a sans" style="left:1919.20px;top:676.1px;width:23.75px;height:22.2px;color:#000;;text-align:center;font-size:18.2px;line-height:21.0px">d</div><div class="a sans" style="left:1942.95px;top:676.1px;width:23.75px;height:22.2px;color:#000;;text-align:center;font-size:18.2px;line-height:21.0px">e</div><div class="a sans" style="left:1966.70px;top:676.1px;width:23.75px;height:22.2px;color:#000;;text-align:center;font-size:18.2px;line-height:21.0px">f</div>
<div class="a" style="left:1677.4px;top:657.50px;font-family:'Liberation Sans',sans-serif;font-size:14.4px;line-height:19px;color:#c4c4c4;">don't use to</div><div class="a" style="left:1677.4px;top:675.50px;font-family:'Liberation Sans',sans-serif;font-size:14.4px;line-height:19px;color:#c4c4c4;">access elements!</div>
<div class="panel" style="left:1295px;top:750.3px;width:802.6px;height:602.5px"></div>
<div class="a" style="left:1306.4px;top:765.70px;font-family:'Liberation Sans',sans-serif;font-size:28.8px;line-height:37px;letter-spacing:0.55px;">String</div><svg class="a" style="left:1391.4px;top:776.2px" width="26" height="16" viewBox="0 0 26 16"><path d="M0.4 8H23.6M17.6 2.6L24 8L17.6 13.4" fill="none" stroke="#000" stroke-width="1.7"/></svg><div class="a" style="left:1424.2px;top:765.70px;font-family:'Liberation Sans',sans-serif;font-size:28.8px;line-height:37px;letter-spacing:0.95px;">Number</div><div class="a" style="left:1547.6px;top:765.70px;font-family:'Liberation Sans',sans-serif;font-size:28.8px;line-height:37px;letter-spacing:0.05px;">Conversion</div><div class="a" style="left:1306.2px;top:1135.10px;font-family:'Liberation Sans',sans-serif;font-size:28.8px;line-height:37px;letter-spacing:0.95px;">Number</div><svg class="a" style="left:1421.8px;top:1145.6px" width="26" height="16" viewBox="0 0 26 16"><path d="M0.4 8H23.6M17.6 2.6L24 8L17.6 13.4" fill="none" stroke="#000" stroke-width="1.7"/></svg><div class="a" style="left:1455.3px;top:1135.10px;font-family:'Liberation Sans',sans-serif;font-size:28.8px;line-height:37px;letter-spacing:0.55px;">String</div><div class="a" style="left:1547.6px;top:1135.10px;font-family:'Liberation Sans',sans-serif;font-size:28.8px;line-height:37px;letter-spacing:0.05px;">Conversion</div><div class="card" style="left:1305.8px;top:816px;width:780.5px;height:293px"></div><div class="card" style="left:1305.8px;top:1185.7px;width:780.5px;height:156.4px"></div>
<div class="a" style="left:1321.5px;top:835.50px;font-family:'Liberation Mono',monospace;font-size:20.23px;line-height:26px;">         int       <b>sto<span style="color:#0000ff">i</span></b> (<i class="dk"></i><span class="cg">,</span><i class="dk dr"></i><span class="cg">,</span><i class="dk db"></i>);</div><div class="a" style="left:1321.5px;top:862.25px;font-family:'Liberation Mono',monospace;font-size:20.23px;line-height:26px;">         long      <b>sto<span style="color:#0000ff">l</span></b> (<i class="dk"></i><span class="cg">,</span><i class="dk dr"></i><span class="cg">,</span><i class="dk db"></i>);</div><div class="a" style="left:1321.5px;top:889.00px;font-family:'Liberation Mono',monospace;font-size:20.23px;line-height:26px;">         long long <b>sto<span style="color:#0000ff">ll</span></b>(<i class="dk"></i><span class="cg">,</span><i class="dk dr"></i><span class="cg">,</span><i class="dk db"></i>);</div><div class="a" style="left:1321.5px;top:942.50px;font-family:'Liberation Mono',monospace;font-size:20.23px;line-height:26px;">unsigned long      <b>sto<span style="color:#0000ff">ul</span></b> (<i class="dk"></i><span class="cg">,</span><i class="dk dr"></i><span class="cg">,</span><i class="dk db"></i>);</div><div class="a" style="left:1321.5px;top:969.25px;font-family:'Liberation Mono',monospace;font-size:20.23px;line-height:26px;">unsigned long long <b>sto<span style="color:#0000ff">ull</span></b>(<i class="dk"></i><span class="cg">,</span><i class="dk dr"></i><span class="cg">,</span><i class="dk db"></i>);</div><div class="a" style="left:1321.5px;top:1022.75px;font-family:'Liberation Mono',monospace;font-size:20.23px;line-height:26px;">       float       <b>sto<span style="color:#0000ff">f</span></b> (<i class="dk"></i><span class="cg">,</span><i class="dk dr"></i><span class="cg">,</span><i class="dk db"></i>);</div><div class="a" style="left:1321.5px;top:1049.50px;font-family:'Liberation Mono',monospace;font-size:20.23px;line-height:26px;">       double      <b>sto<span style="color:#0000ff">d</span></b> (<i class="dk"></i><span class="cg">,</span><i class="dk dr"></i><span class="cg">,</span><i class="dk db"></i>);</div><div class="a" style="left:1321.5px;top:1076.25px;font-family:'Liberation Mono',monospace;font-size:20.23px;line-height:26px;">       long double <b>sto<span style="color:#0000ff">ld</span></b>(<i class="dk"></i><span class="cg">,</span><i class="dk dr"></i><span class="cg">,</span><i class="dk db"></i>);</div><div class="a" style="left:1761.5px;top:827.20px;font-family:'Liberation Mono',monospace;font-size:20.17px;line-height:26px;-webkit-text-stroke:.6px #000;">const string&amp;</div><div class="a" style="left:1761.5px;top:901.80px;font-family:'Liberation Mono',monospace;font-size:20.17px;line-height:26px;color:#ff0000;-webkit-text-stroke:0.3px #ff0000;">std::size_t* p = nullptr</div><div class="a" style="left:1761.5px;top:995.60px;font-family:'Liberation Mono',monospace;font-size:20.17px;line-height:26px;color:#0000ff;-webkit-text-stroke:.6px #0000ff;">int base = 10</div><div class="a" style="left:1777.2px;top:851.90px;font-family:'Liberation Sans',sans-serif;font-size:19.8px;line-height:26px;color:#8f8f8f;">input string</div><div class="a" style="left:1777.2px;top:926.80px;font-family:'Liberation Sans',sans-serif;font-size:19.8px;line-height:26px;color:#8f8f8f;">output for</div><div class="a" style="left:1777.2px;top:952.80px;font-family:'Liberation Sans',sans-serif;font-size:19.8px;line-height:26px;color:#8f8f8f;">number of processed characters</div><div class="a" style="left:1777.2px;top:1020.80px;font-family:'Liberation Sans',sans-serif;font-size:19.8px;line-height:26px;color:#8f8f8f;">base of target system;</div><div class="a" style="left:1777.2px;top:1046.60px;font-family:'Liberation Sans',sans-serif;font-size:19.8px;line-height:26px;color:#8f8f8f;">default: decimal</div><svg class="a" style="left:1620px;top:815px" width="145" height="205" viewBox="0 0 145 205"><path d="M13.1 22.4V7.8H115.3V25.3H137" fill="none" stroke="#000" stroke-width="1.1"/><path d="M38.7 92.4V101H137" fill="none" stroke="#ff5050" stroke-width="1.2"/><path d="M76.4 172V194H137" fill="none" stroke="#3030ff" stroke-width="1.2"/></svg>
<div class="a" style="left:1316.0px;top:1199.40px;font-family:'Liberation Mono',monospace;font-size:20.17px;line-height:26px;"><span style="-webkit-text-stroke:0.4px #000">string</span> <b>to_string</b>( <i class="dk dk2" style="width:12.1px"></i> );</div><svg class="a" style="left:1325px;top:1222px" width="532" height="36" viewBox="0 0 532 36"><path d="M5 32.2C5 24 9 19.9 17 19.9H203C211 19.9 216.2 14 216.2 4.2C216.2 14 221.4 19.9 229.4 19.9H514C522 19.9 526 24 526 32.2" fill="none" stroke="#222" stroke-width="1.1"/></svg>
<div class="a" style="left:1343.2px;top:1257.10px;font-family:'Liberation Mono',monospace;font-size:17.87px;line-height:23px;color:#7f7f7f;-webkit-text-stroke:.25px #7f7f7f;">int | long | long long |</div><div class="a" style="left:1343.2px;top:1280.50px;font-family:'Liberation Mono',monospace;font-size:17.87px;line-height:23px;color:#7f7f7f;-webkit-text-stroke:.25px #7f7f7f;">unsigned | unsinged long | unsigned long long |</div><div class="a" style="left:1343.2px;top:1303.70px;font-family:'Liberation Mono',monospace;font-size:17.87px;line-height:23px;color:#7f7f7f;-webkit-text-stroke:.25px #7f7f7f;">float | double | long double</div></div>
</body></html>
